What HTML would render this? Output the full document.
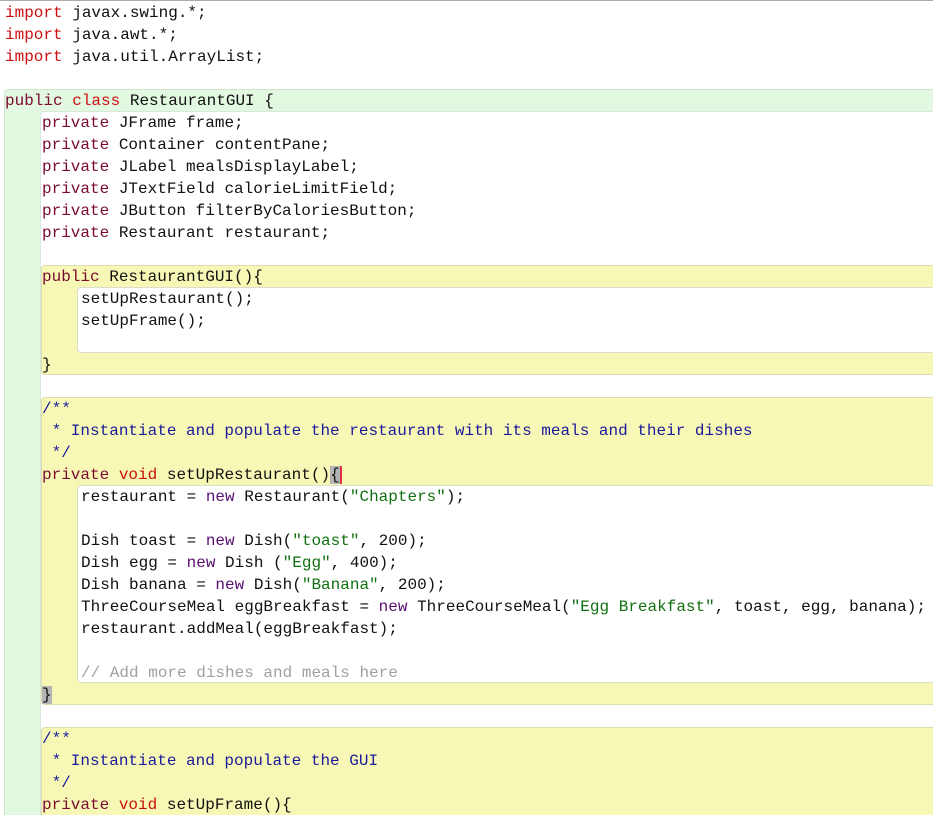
<!DOCTYPE html>
<html><head><style>
html,body{margin:0;width:933px;height:815px;overflow:hidden}
body{background:#fff;position:relative;font-family:"Liberation Mono",monospace;font-size:16px;color:#111}
.b{position:absolute;box-sizing:border-box}
.l{position:absolute;height:22px;line-height:22px;white-space:pre}
.k{color:#7a0a30}.r{color:#cc1010}.n{color:#5a1070}.s{color:#107010}.c{color:#1a1a9a}.g{color:#a0a0a0}
.hl{background:#b4b4b4}
</style></head><body>
<div class="b" style="left:0;top:0;width:933px;height:1px;background:#aaa"></div>
<div class="b" style="left:4px;top:89px;width:940px;height:740px;background:#e2f8e0;border:1px solid #cfe6cc;border-radius:4px"></div>
<div class="b" style="left:40px;top:111px;width:900px;height:720px;background:#fff;border:1px solid #d8e8d8;border-radius:3px"></div>
<div class="b" style="left:41px;top:265px;width:900px;height:110px;background:#f8f8b6;border:1px solid #dcdcb0;border-radius:4px"></div>
<div class="b" style="left:77px;top:287px;width:870px;height:66px;background:#fff;border:1px solid #dcdccc;border-radius:4px"></div>
<div class="b" style="left:41px;top:397px;width:900px;height:308px;background:#f8f8b6;border:1px solid #dcdcb0;border-radius:4px"></div>
<div class="b" style="left:77px;top:485px;width:870px;height:198px;background:#fff;border:1px solid #dcdccc;border-radius:4px"></div>
<div class="b" style="left:41px;top:727px;width:900px;height:100px;background:#f8f8b6;border:1px solid #dcdcb0;border-radius:4px"></div>

<div class="l" style="top:2px;left:5px"><span class="r">import</span> javax.swing.*;</div>
<div class="l" style="top:24px;left:5px"><span class="r">import</span> java.awt.*;</div>
<div class="l" style="top:46px;left:5px"><span class="r">import</span> java.util.ArrayList;</div>
<div class="l" style="top:90px;left:5px"><span class="k">public</span> <span class="r">class</span> RestaurantGUI {</div>
<div class="l" style="top:112px;left:42px"><span class="k">private</span> JFrame frame;</div>
<div class="l" style="top:134px;left:42px"><span class="k">private</span> Container contentPane;</div>
<div class="l" style="top:156px;left:42px"><span class="k">private</span> JLabel mealsDisplayLabel;</div>
<div class="l" style="top:178px;left:42px"><span class="k">private</span> JTextField calorieLimitField;</div>
<div class="l" style="top:200px;left:42px"><span class="k">private</span> JButton filterByCaloriesButton;</div>
<div class="l" style="top:222px;left:42px"><span class="k">private</span> Restaurant restaurant;</div>
<div class="l" style="top:266px;left:42px"><span class="k">public</span> RestaurantGUI(){</div>
<div class="l" style="top:288px;left:81px">setUpRestaurant();</div>
<div class="l" style="top:310px;left:81px">setUpFrame();</div>
<div class="l" style="top:354px;left:42px">}</div>
<div class="l c" style="top:398px;left:42px">/**</div>
<div class="l c" style="top:420px;left:42px"> * Instantiate and populate the restaurant with its meals and their dishes</div>
<div class="l c" style="top:442px;left:42px"> */</div>
<div class="l" style="top:464px;left:42px"><span class="k">private</span> <span class="r">void</span> setUpRestaurant()<span class="hl" style="border-right:2px solid #e03040">{</span></div>
<div class="l" style="top:486px;left:81px">restaurant = <span class="n">new</span> Restaurant(<span class="s">"Chapters"</span>);</div>
<div class="l" style="top:530px;left:81px">Dish toast = <span class="n">new</span> Dish(<span class="s">"toast"</span>, 200);</div>
<div class="l" style="top:552px;left:81px">Dish egg = <span class="n">new</span> Dish (<span class="s">"Egg"</span>, 400);</div>
<div class="l" style="top:574px;left:81px">Dish banana = <span class="n">new</span> Dish(<span class="s">"Banana"</span>, 200);</div>
<div class="l" style="top:596px;left:81px">ThreeCourseMeal eggBreakfast = <span class="n">new</span> ThreeCourseMeal(<span class="s">"Egg Breakfast"</span>, toast, egg, banana);</div>
<div class="l" style="top:618px;left:81px">restaurant.addMeal(eggBreakfast);</div>
<div class="l g" style="top:662px;left:81px">// Add more dishes and meals here</div>
<div class="l" style="top:684px;left:42px"><span class="hl">}</span></div>
<div class="l c" style="top:728px;left:42px">/**</div>
<div class="l c" style="top:750px;left:42px"> * Instantiate and populate the GUI</div>
<div class="l c" style="top:772px;left:42px"> */</div>
<div class="l" style="top:794px;left:42px"><span class="k">private</span> <span class="r">void</span> setUpFrame(){</div>
</body></html>
